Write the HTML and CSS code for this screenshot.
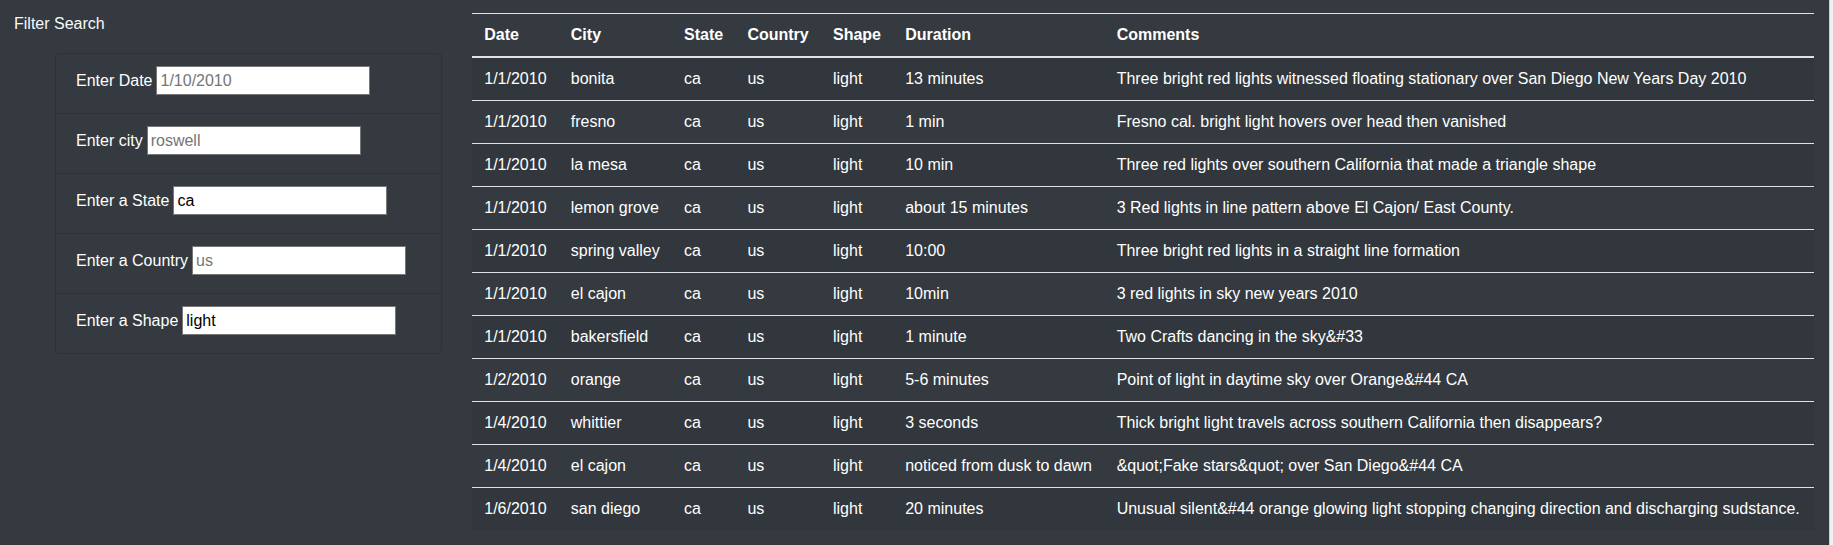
FILE: index.html
```html
<!DOCTYPE html>
<html lang="en">
<head>
<meta charset="utf-8">
<title>UFO Sightings</title>
<link rel="stylesheet" href="styles.css">
</head>
<body>
<div class="page">
  <div class="main">
    <aside class="side">
      <div class="side-title">Filter Search</div>
      <ul class="filters">
        <li class="filter"><label for="date">Enter Date</label><input id="date" type="text" placeholder="1/10/2010"></li>
        <li class="filter"><label for="city">Enter city</label><input id="city" type="text" placeholder="roswell"></li>
        <li class="filter"><label for="state">Enter a State</label><input id="state" type="text" value="ca"></li>
        <li class="filter"><label for="country">Enter a Country</label><input id="country" type="text" placeholder="us"></li>
        <li class="filter"><label for="shape">Enter a Shape</label><input id="shape" type="text" value="light"></li>
      </ul>
    </aside>
    <section class="content">
      <table class="ufo-table">
        <thead>
          <tr><th>Date</th><th>City</th><th>State</th><th>Country</th><th>Shape</th><th>Duration</th><th>Comments</th></tr>
        </thead>
        <tbody>
          <tr><td>1/1/2010</td><td>bonita</td><td>ca</td><td>us</td><td>light</td><td>13 minutes</td><td>Three bright red lights witnessed floating stationary over San Diego New Years Day 2010</td></tr>
          <tr><td>1/1/2010</td><td>fresno</td><td>ca</td><td>us</td><td>light</td><td>1 min</td><td>Fresno cal. bright light hovers over head then vanished</td></tr>
          <tr><td>1/1/2010</td><td>la mesa</td><td>ca</td><td>us</td><td>light</td><td>10 min</td><td>Three red lights over southern California that made a triangle shape</td></tr>
          <tr><td>1/1/2010</td><td>lemon grove</td><td>ca</td><td>us</td><td>light</td><td>about 15 minutes</td><td>3 Red lights in line pattern above El Cajon/ East County.</td></tr>
          <tr><td>1/1/2010</td><td>spring valley</td><td>ca</td><td>us</td><td>light</td><td>10:00</td><td>Three bright red lights in a straight line formation</td></tr>
          <tr><td>1/1/2010</td><td>el cajon</td><td>ca</td><td>us</td><td>light</td><td>10min</td><td>3 red lights in sky new years 2010</td></tr>
          <tr><td>1/1/2010</td><td>bakersfield</td><td>ca</td><td>us</td><td>light</td><td>1 minute</td><td>Two Crafts dancing in the sky&amp;#33</td></tr>
          <tr><td>1/2/2010</td><td>orange</td><td>ca</td><td>us</td><td>light</td><td>5-6 minutes</td><td>Point of light in daytime sky over Orange&amp;#44 CA</td></tr>
          <tr><td>1/4/2010</td><td>whittier</td><td>ca</td><td>us</td><td>light</td><td>3 seconds</td><td>Thick bright light travels across southern California then disappears?</td></tr>
          <tr><td>1/4/2010</td><td>el cajon</td><td>ca</td><td>us</td><td>light</td><td>noticed from dusk to dawn</td><td>&amp;quot;Fake stars&amp;quot; over San Diego&amp;#44 CA</td></tr>
          <tr><td>1/6/2010</td><td>san diego</td><td>ca</td><td>us</td><td>light</td><td>20 minutes</td><td>Unusual silent&amp;#44 orange glowing light stopping changing direction and discharging sudstance.</td></tr>
        </tbody>
      </table>
    </section>
  </div>
  <div class="edge"></div>
</div>
</body>
</html>
```

FILE: styles.css
```css
html, body {
  margin: 0;
  padding: 0;
  height: 100%;
}

body {
  background: #343a40;
  color: #fff;
  font-family: "Liberation Sans", Arial, sans-serif;
  font-size: 16px;
}

.page {
  display: flex;
  min-height: 100%;
}

.main {
  flex: 1;
  display: flex;
  align-items: flex-start;
  min-width: 0;
}

.edge {
  width: 3px;
  flex: none;
  background: #f1f1f1;
  border-left: 1px solid #cfcfcf;
}

.side {
  flex: 0 0 25%;
  box-sizing: border-box;
  padding: 12px 15px 0 14px;
}

.side-title {
  line-height: 24px;
  color: #f8f9fa;
}

.filters {
  list-style: none;
  margin: 17px 0 0 41px;
  padding: 0;
  border: 1px solid rgba(0, 0, 0, 0.13);
  border-radius: 4px;
}

.filter {
  display: flex;
  align-items: center;
  gap: 4px;
  padding: 12px 20px 18px;
  color: #fff;
}

.filter + .filter {
  border-top: 1px solid rgba(0, 0, 0, 0.13);
}

.filter label {
  line-height: 18px;
  white-space: nowrap;
}

.filter input {
  box-sizing: border-box;
  width: 214px;
  height: 29px;
  margin: 0;
  padding: 1px 3px;
  border: 1px solid #767676;
  border-radius: 0;
  background: #fff;
  color: #000;
  font-family: "Liberation Sans", Arial, sans-serif;
  font-size: 16px;
  outline: none;
}

.filter input::placeholder {
  color: #757575;
  opacity: 1;
}

.content {
  flex: 0 0 75%;
  box-sizing: border-box;
  padding: 13px 15px 0;
  min-width: 0;
}

.ufo-table {
  width: 100%;
  border-collapse: collapse;
  color: #fff;
}

.ufo-table th,
.ufo-table td {
  padding: 12px;
  text-align: left;
  vertical-align: top;
  border-top: 1px solid #dee2e6;
  line-height: 18px;
  white-space: nowrap;
}

.ufo-table th {
  font-weight: bold;
}

.ufo-table thead th {
  border-bottom: 2px solid #dee2e6;
}

.ufo-table tbody tr:first-child td {
  border-top: none;
}

.ufo-table tbody tr:nth-child(odd) {
  background: rgba(0, 0, 0, 0.05);
}
```
